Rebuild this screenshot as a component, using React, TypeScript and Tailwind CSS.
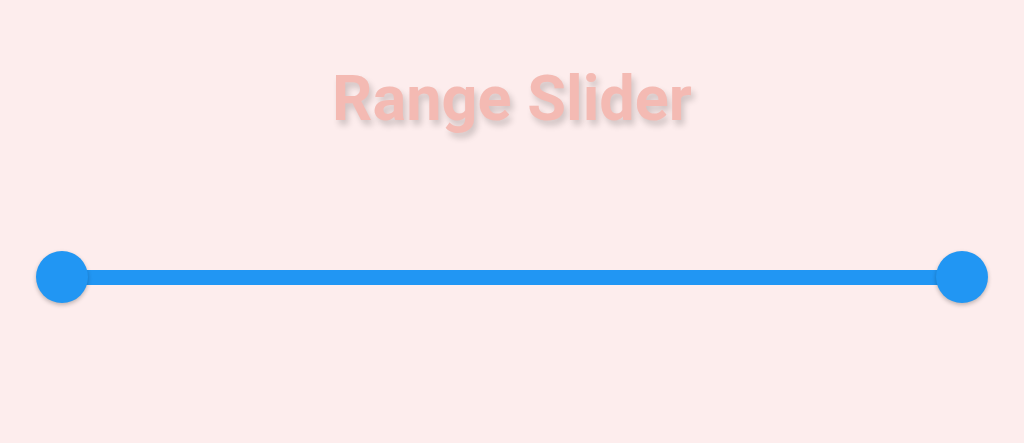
import React from 'react';

const Thumb: React.FC = () => (
    <div className="relative z-10 w-[52px] h-[52px] shrink-0 rounded-full bg-[#2196f3] shadow-[0_2px_4px_rgba(0,0,0,0.25)]"></div>
);

const App: React.FC = () => {
    return (
        <div className="h-[443px] w-full bg-[#fdeded] flex flex-col font-['Roboto',sans-serif]">
            <h1 className="pt-[62px] text-center text-[63px] leading-[74px] font-bold text-[#f4bab3] [text-shadow:3px_5px_6px_rgba(0,0,0,0.18)]">
                Range Slider
            </h1>

            {/* Slider */}
            <div className="mt-[115px] px-[36px] flex items-center">
                <Thumb />
                <div className="flex-1 h-[15px] -mx-[26px] bg-[#2196f3]"></div>
                <Thumb />
            </div>
        </div>
    );
};

export default App;
